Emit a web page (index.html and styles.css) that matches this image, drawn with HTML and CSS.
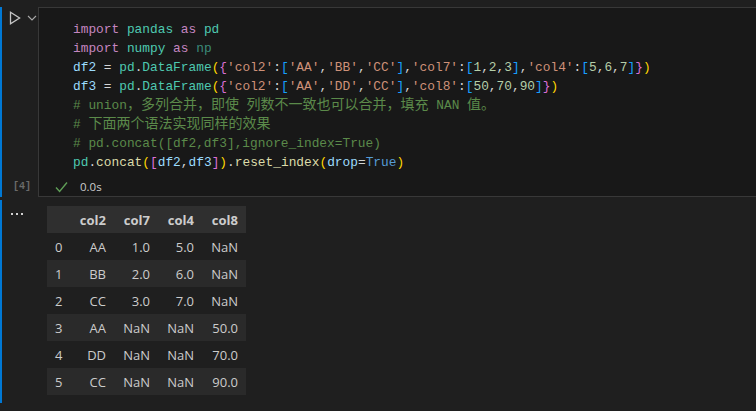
FILE: index.html
```html
<!DOCTYPE html>
<html>
<head>
  <title>Notebook cell</title>
  <meta name="viewport" content="width=device-width, initial-scale=1">
  <link rel="stylesheet" href="styles.css">
</head>
<body>
  <!-- Code cell -->
  <div class="row input-row">
    <div class="gutter">
      <div class="run-tools">
        <svg class="run-icon" width="12" height="14" viewBox="0 0 12 14"><path d="M1.5 1.2 L10.6 7 L1.5 12.8 Z" fill="none" stroke="#c5c5c5" stroke-width="1.3"/></svg>
        <svg class="chevron" width="10" height="6" viewBox="0 0 10 6"><path d="M1 1 L5 5 L9 1" fill="none" stroke="#a9a9a9" stroke-width="1.1"/></svg>
      </div>
      <div class="exec-count">[4]</div>
    </div>
    <div class="cell">
      <pre class="code"><span class="kw">import</span> <span class="ty">pandas</span> <span class="kw">as</span> <span class="ty">pd</span>
<span class="kw">import</span> <span class="ty">numpy</span> <span class="kw">as</span> <span class="dim">np</span>
<span class="var">df2</span> = <span class="ty">pd</span>.<span class="ty">DataFrame</span><span class="b1">(</span><span class="b2">{</span><span class="str">'col2'</span>:<span class="b3">[</span><span class="str">'AA'</span>,<span class="str">'BB'</span>,<span class="str">'CC'</span><span class="b3">]</span>,<span class="str">'col7'</span>:<span class="b3">[</span><span class="num">1</span>,<span class="num">2</span>,<span class="num">3</span><span class="b3">]</span>,<span class="str">'col4'</span>:<span class="b3">[</span><span class="num">5</span>,<span class="num">6</span>,<span class="num">7</span><span class="b3">]</span><span class="b2">}</span><span class="b1">)</span>
<span class="var">df3</span> = <span class="ty">pd</span>.<span class="ty">DataFrame</span><span class="b1">(</span><span class="b2">{</span><span class="str">'col2'</span>:<span class="b3">[</span><span class="str">'AA'</span>,<span class="str">'DD'</span>,<span class="str">'CC'</span><span class="b3">]</span>,<span class="str">'col8'</span>:<span class="b3">[</span><span class="num">50</span>,<span class="num">70</span>,<span class="num">90</span><span class="b3">]</span><span class="b2">}</span><span class="b1">)</span>
<span class="com"># union<span class="cjk">，多列合并，即使</span> <span class="cjk">列数不一致也可以合并，填充</span> NAN <span class="cjk">值。</span></span>
<span class="com"># <span class="cjk">下面两个语法实现同样的效果</span></span>
<span class="com"># pd.concat([df2,df3],ignore_index=True)</span>
<span class="ty">pd</span>.<span class="fn">concat</span><span class="b1">(</span><span class="b2">[</span><span class="var">df2</span>,<span class="var">df3</span><span class="b2">]</span><span class="b1">)</span>.<span class="fn">reset_index</span><span class="b1">(</span><span class="var">drop</span>=<span class="kwb">True</span><span class="b1">)</span></pre>
      <div class="status">
        <svg class="check" width="13" height="12" viewBox="0 0 13 12"><path d="M1 6.5 L4.6 10.5 L12 1.5" fill="none" stroke="#5f9e57" stroke-width="1.4"/></svg>
        <span>0.0s</span>
      </div>
    </div>
  </div>

  <!-- Output -->
  <div class="row output-row">
    <div class="gutter">
      <div class="more"><i></i><i></i><i></i></div>
    </div>
    <table class="frame">
      <thead>
        <tr><th></th><th>col2</th><th>col7</th><th>col4</th><th>col8</th></tr>
      </thead>
      <tbody>
        <tr><th>0</th><td>AA</td><td>1.0</td><td>5.0</td><td>NaN</td></tr>
        <tr><th>1</th><td>BB</td><td>2.0</td><td>6.0</td><td>NaN</td></tr>
        <tr><th>2</th><td>CC</td><td>3.0</td><td>7.0</td><td>NaN</td></tr>
        <tr><th>3</th><td>AA</td><td>NaN</td><td>NaN</td><td>50.0</td></tr>
        <tr><th>4</th><td>DD</td><td>NaN</td><td>NaN</td><td>70.0</td></tr>
        <tr><th>5</th><td>CC</td><td>NaN</td><td>NaN</td><td>90.0</td></tr>
      </tbody>
    </table>
  </div>
</body>
</html>
```

FILE: styles.css
```css
html, body {
  margin: 0;
  height: 411px;
  overflow: hidden;
  background-color: #1f1f1f;
}

/* Rows with the blue focus bar */
.row {
  display: flex;
  border-left: 2px solid #0078d4;
}

.input-row {
  margin-top: 7px;
  height: 190px;
}

.output-row {
  margin-top: 3px;
  height: 203px;
}

/* Left gutter */
.gutter {
  flex: none;
  width: 36px;
  position: relative;
}

.run-tools {
  display: flex;
  align-items: center;
  gap: 6px;
  padding: 4px 0 0 7px;
}

.exec-count {
  position: absolute;
  left: 11px;
  top: 174px;
  font: 10px "Liberation Mono", monospace;
  font-weight: bold;
  color: #6b6b6b;
}

.more {
  display: flex;
  gap: 3px;
  padding: 13px 0 0 9px;
}

.more i {
  width: 2px;
  height: 2px;
  background-color: #d0d0d0;
}

/* Code cell */
.cell {
  flex: 1;
  border: 1px solid #383838;
  border-right: none;
  background-color: #181818;
  margin-right: -2px;
}

.code {
  margin: 0;
  padding: 12px 0 0 34px;
  font: 12.83px/19px "Liberation Mono", monospace;
  color: #d4d4d4;
  white-space: pre;
}

.cjk {
  font-family: "Noto Sans CJK SC", sans-serif;
  font-size: 14px;
  line-height: 1;
}

.kw { color: #c586c0; }
.ty { color: #4ec9b0; }
.dim { color: #3b8a78; }
.var { color: #9cdcfe; }
.fn { color: #dcdcaa; }
.str { color: #ce9178; }
.num { color: #b5cea8; }
.kwb { color: #569cd6; }
.com { color: #5b8a4a; }
.b1 { color: #ffd700; }
.b2 { color: #da70d6; }
.b3 { color: #179fff; }

.status {
  display: flex;
  align-items: center;
  gap: 12px;
  padding: 7px 0 0 16px;
  font: 11.5px "Open Sans", sans-serif;
  color: #cccccc;
}

/* Output table */
.frame {
  margin: 6px 0 0 9px;
  height: 189px;
  border-collapse: collapse;
  table-layout: fixed;
  width: 199px;
  font: 13px "Open Sans", sans-serif;
  color: #cccccc;
}

.frame th, .frame td {
  padding: 0 8px;
  height: 27px;
  text-align: right;
  font-weight: normal;
}

.frame th:first-child {
  width: 7px;
  text-align: right;
}

.frame thead th {
  font-weight: bold;
  background-color: #2f2f2f;
}

.frame tbody tr:nth-child(even) {
  background-color: #2a2a2a;
}
```
